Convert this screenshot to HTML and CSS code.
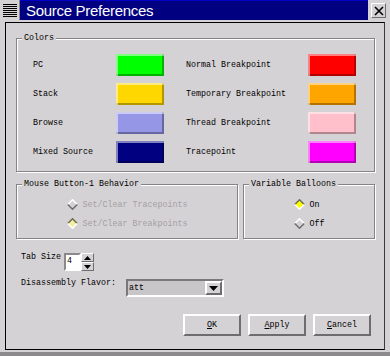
FILE: index.html
```html
<!DOCTYPE html>
<html>
<head>
<meta charset="utf-8">
<title>Source Preferences</title>
<link rel="stylesheet" href="styles.css">
</head>
<body>
<div class="window">
  <div class="titlebar">
    <div class="menu-btn"><span class="menu-lines"></span></div>
    <div class="title">Source Preferences</div>
    <div class="close-area">
      <div class="close-btn">
        <svg width="10" height="10" viewBox="0 0 10 10"><path d="M1 1 L9 9 M9 1 L1 9" stroke="#000" stroke-width="1.6" fill="none"/></svg>
      </div>
    </div>
  </div>
  <div class="panel">
    <fieldset class="group colors">
      <legend>Colors</legend>
      <div class="color-grid">
        <span class="lbl">PC</span><span class="swatch sw-pc"></span>
        <span class="lbl lbl-r">Normal Breakpoint</span><span class="swatch sw-normal"></span>
        <span class="lbl">Stack</span><span class="swatch sw-stack"></span>
        <span class="lbl lbl-r">Temporary Breakpoint</span><span class="swatch sw-temp"></span>
        <span class="lbl">Browse</span><span class="swatch sw-browse"></span>
        <span class="lbl lbl-r">Thread Breakpoint</span><span class="swatch sw-thread"></span>
        <span class="lbl">Mixed Source</span><span class="swatch sw-mixed"></span>
        <span class="lbl lbl-r">Tracepoint</span><span class="swatch sw-trace"></span>
      </div>
    </fieldset>
    <div class="group-row">
      <fieldset class="group mouse">
        <legend>Mouse Button-1 Behavior</legend>
        <div class="radios">
          <div class="radio disabled">
            <svg class="diamond" width="11" height="11" viewBox="0 0 11 11"><polygon points="5.5,0.8 10.2,5.5 5.5,10.2 0.8,5.5" fill="#d5d2d5"/><polyline points="0.8,5.5 5.5,0.8 10.2,5.5" fill="none" stroke="#fff" stroke-width="1.5"/><polyline points="0.8,5.5 5.5,10.2 10.2,5.5" fill="none" stroke="#6e6c6e" stroke-width="1.5"/></svg>
            <span>Set/Clear Tracepoints</span>
          </div>
          <div class="radio disabled">
            <svg class="diamond" width="11" height="11" viewBox="0 0 11 11"><polygon points="5.5,0.8 10.2,5.5 5.5,10.2 0.8,5.5" fill="#f2f0a0"/><polyline points="0.8,5.5 5.5,0.8 10.2,5.5" fill="none" stroke="#6e6c50" stroke-width="1.5"/><polyline points="0.8,5.5 5.5,10.2 10.2,5.5" fill="none" stroke="#fff" stroke-width="1.5"/></svg>
            <span>Set/Clear Breakpoints</span>
          </div>
        </div>
      </fieldset>
      <fieldset class="group balloons">
        <legend>Variable Balloons</legend>
        <div class="radios">
          <div class="radio">
            <svg class="diamond" width="11" height="11" viewBox="0 0 11 11"><polygon points="5.5,0.8 10.2,5.5 5.5,10.2 0.8,5.5" fill="#ffff00"/><polyline points="0.8,5.5 5.5,0.8 10.2,5.5" fill="none" stroke="#6e6c50" stroke-width="1.5"/><polyline points="0.8,5.5 5.5,10.2 10.2,5.5" fill="none" stroke="#fff" stroke-width="1.5"/></svg>
            <span>On</span>
          </div>
          <div class="radio">
            <svg class="diamond" width="11" height="11" viewBox="0 0 11 11"><polygon points="5.5,0.8 10.2,5.5 5.5,10.2 0.8,5.5" fill="#d5d2d5"/><polyline points="0.8,5.5 5.5,0.8 10.2,5.5" fill="none" stroke="#fff" stroke-width="1.5"/><polyline points="0.8,5.5 5.5,10.2 10.2,5.5" fill="none" stroke="#6e6c6e" stroke-width="1.5"/></svg>
            <span>Off</span>
          </div>
        </div>
      </fieldset>
    </div>
    <div class="tab-row">
      <span class="row-lbl">Tab Size</span>
      <span class="entry">4</span>
      <span class="spin">
        <span class="spin-btn"><svg width="7" height="4" viewBox="0 0 7 4"><polygon points="3.5,0 7,4 0,4" fill="#000"/></svg></span>
        <span class="spin-btn"><svg width="7" height="4" viewBox="0 0 7 4"><polygon points="0,0 7,0 3.5,4" fill="#000"/></svg></span>
      </span>
    </div>
    <div class="flavor-row">
      <span class="row-lbl flavor-lbl">Disassembly Flavor:</span>
      <span class="combo">
        <span class="combo-text">att</span>
        <span class="combo-btn"><svg width="9" height="5" viewBox="0 0 9 5"><polygon points="0,0 9,0 4.5,5" fill="#000"/></svg></span>
      </span>
    </div>
    <div class="buttons">
      <span class="btn"><u>O</u>K</span>
      <span class="btn"><u>A</u>pply</span>
      <span class="btn"><u>C</u>ancel</span>
    </div>
  </div>
  <div class="bottom-band"></div>
</div>
</body>
</html>
```

FILE: styles.css
```css
html, body {
  margin: 0;
  padding: 0;
}
body {
  background: #d5d2d5;
  font-family: "Liberation Mono", "DejaVu Sans Mono", monospace;
  font-size: 8.33px;
  font-weight: normal;
  color: #000;
  width: 390px;
  height: 356px;
  overflow: hidden;
}
.window {
  width: 390px;
  height: 356px;
  display: flex;
  flex-direction: column;
}

/* title bar */
.titlebar {
  height: 20px;
  display: flex;
  flex: none;
}
.menu-btn {
  width: 20px;
  height: 20px;
  box-sizing: border-box;
  display: flex;
  align-items: center;
  justify-content: center;
  background: #d5d2d5;
  border-right: 1px solid #8a888a;
}
.menu-lines {
  width: 14px;
  height: 13px;
  background: repeating-linear-gradient(to bottom, #000 0 1px, transparent 1px 2px);
}
.title {
  width: 348px;
  box-sizing: border-box;
  background: #000080;
  border-top: 1px solid #0000c8;
  color: #fff;
  font-family: "Liberation Sans", Arial, sans-serif;
  font-weight: normal;
  font-size: 15px;
  letter-spacing: -0.3px;
  line-height: 19px;
  padding-left: 6px;
}
.close-area {
  flex: 1;
  display: flex;
  align-items: flex-start;
  padding: 3px 0 0 3px;
}
.close-btn {
  width: 15px;
  height: 15px;
  box-sizing: border-box;
  border: 1px solid;
  border-color: #fff #6e6c6e #6e6c6e #fff;
  display: flex;
  align-items: center;
  justify-content: center;
}

/* main panel */
.panel {
  margin: 2px 5px 0 5px;
  height: 328px;
  box-sizing: border-box;
  border: 1px solid #000;
  border-right-color: #3a3a3a;
  display: flex;
  flex-direction: column;
  flex: none;
}
.bottom-band {
  margin-top: 2px;
  flex: 1;
  background: #8c8a8c;
}

/* group boxes */
.group {
  margin: 0;
  padding: 0;
  min-width: 0;
  box-sizing: border-box;
  border: 1px solid #858385;
  box-shadow: inset 1px 1px 0 #fff, 1px 1px 0 #fff;
}
.group legend {
  padding: 0 2px;
  margin-left: 5px;
  line-height: 10px;
  background: #d5d2d5;
}
.colors {
  margin: 10px 0 0 10px;
  width: 359px;
  padding-bottom: 8px;
}
.color-grid {
  margin: 11px 0 0 16px;
  display: grid;
  grid-template-columns: 83px 48px 144px 48px;
  grid-auto-rows: 22px;
  row-gap: 7px;
  align-items: center;
}
.lbl-r {
  padding-left: 22px;
}
.swatch {
  height: 22px;
  box-sizing: border-box;
  box-shadow: inset 2px 2px 0 rgba(255,255,255,0.5), inset -2px -2px 0 rgba(0,0,0,0.3);
}
.sw-pc { background: #00ff00; }
.sw-stack { background: #ffd700; }
.sw-browse { background: #9696e6; }
.sw-mixed { background: #000080; }
.sw-normal { background: #ff0000; }
.sw-temp { background: #ffa500; }
.sw-thread { background: #ffc0cb; }
.sw-trace { background: #ff00ff; }

.group-row {
  margin: 7px 0 0 10px;
  display: flex;
  gap: 5px;
}
.mouse { width: 222px; padding-bottom: 5px; }
.balloons { width: 132px; padding-bottom: 5px; }
.radios {
  margin-top: 6px;
  display: flex;
  flex-direction: column;
  align-items: flex-start;
  width: max-content;
  margin-left: auto;
  margin-right: auto;
}
.radio {
  height: 19px;
  display: flex;
  align-items: center;
  gap: 5px;
}
.diamond { display: block; flex: none; }
.disabled span {
  color: #a3a1a3;
}

/* tab size */
.tab-row {
  margin: 14px 0 0 15px;
  display: flex;
  align-items: flex-start;
}
.row-lbl {
  line-height: 10px;
  margin-top: -1px;
}
.tab-row .row-lbl { margin-right: 3px; }
.entry {
  width: 17px;
  height: 18px;
  box-sizing: border-box;
  background: #fff;
  border: 2px solid;
  border-color: #8a888a #fff #fff #8a888a;
  padding: 1px 0 0 1px;
  line-height: 10px;
}
.spin {
  display: flex;
  flex-direction: column;
}
.spin-btn {
  width: 13px;
  height: 9px;
  box-sizing: border-box;
  border: 1px solid;
  border-color: #fff #6e6c6e #6e6c6e #fff;
  display: flex;
  align-items: center;
  justify-content: center;
}
.spin-btn svg { display: block; }

/* flavor */
.flavor-row {
  margin: 8px 0 0 15px;
  display: flex;
  align-items: flex-start;
}
.flavor-lbl { margin-right: 10px; }
.combo {
  width: 98px;
  height: 18px;
  box-sizing: border-box;
  border: 2px solid;
  border-color: #7a787a #fff #fff #7a787a;
  background: #c9c6c9;
  display: flex;
  align-items: center;
}
.combo-text {
  flex: 1;
  padding-left: 1px;
}
.combo-btn {
  width: 17px;
  height: 14px;
  box-sizing: border-box;
  border: 2px solid;
  border-color: #fff #6e6c6e #6e6c6e #fff;
  background: #d5d2d5;
  display: flex;
  align-items: center;
  justify-content: center;
}
.combo-btn svg { display: block; }

/* buttons */
.buttons {
  margin: 17px 13px 0 0;
  display: flex;
  justify-content: flex-end;
  gap: 7px;
}
.btn {
  width: 58px;
  height: 22px;
  box-sizing: border-box;
  border: 2px solid;
  border-color: #fff #6e6c6e #6e6c6e #fff;
  display: flex;
  align-items: center;
  justify-content: center;
}
.btn u { text-underline-offset: 1px; }
```
